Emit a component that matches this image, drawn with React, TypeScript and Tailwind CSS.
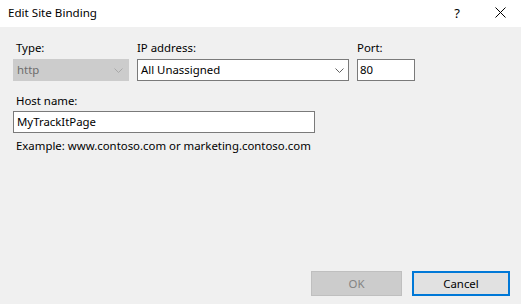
function Chevron({ className }: { className: string }) {
  return (
    <svg width="9" height="5" viewBox="0 0 9 5" className={className}>
      <polyline points="0.5,0.5 4.5,4.5 8.5,0.5" fill="none" stroke="currentColor" strokeWidth="1" />
    </svg>
  );
}

export default function App() {
  return (
    <main
      className="w-[521px] h-[304px] flex flex-col bg-[#f0f0f0] text-[11.4px] text-black overflow-hidden"
      style={{ fontFamily: '"Noto Sans", "Open Sans", sans-serif' }}
    >
      {/* title bar */}
      <div className="h-[27px] bg-white flex items-center">
        <span className="ml-[8px] leading-[16px] -mt-[2px] text-[11.6px]">Edit Site Binding</span>
        <span className="ml-auto mr-[35px] leading-[16px] -mt-[2px] text-[13px]">?</span>
        <svg width="11" height="11" viewBox="0 0 11 11" className="mr-[15px] -mt-[2px]">
          <path d="M0.5 0.5 L10.5 10.5 M10.5 0.5 L0.5 10.5" stroke="black" strokeWidth="1" />
        </svg>
      </div>

      {/* body */}
      <div className="flex-1 flex flex-col pt-[13px] pl-[13px]">
        <div className="flex gap-[8px]">
          <div className="flex flex-col w-[116px]">
            <label className="leading-[16px] pl-[3px] mb-[3px]">Type:</label>
            <div className="h-[22px] flex items-center bg-[#cccccc] border border-[#cccccc] pl-[3px] pr-[5px] text-[#6d6d6d]">
              <span className="flex-1">http</span>
              <Chevron className="text-[#a8a8a8]" />
            </div>
          </div>
          <div className="flex flex-col w-[212px]">
            <label className="leading-[16px] mb-[3px]">IP address:</label>
            <div className="h-[22px] flex items-center bg-white border border-[#7a7a7a] pl-[3px] pr-[4px]">
              <span className="flex-1">All Unassigned</span>
              <Chevron className="text-[#606060]" />
            </div>
          </div>
          <div className="flex flex-col w-[58px]">
            <label className="leading-[16px] mb-[3px]">Port:</label>
            <div className="h-[22px] flex items-center bg-white border border-[#7a7a7a] pl-[2px]">80</div>
          </div>
        </div>

        <label className="mt-[12px] leading-[16px] pl-[3px] mb-[2px]">Host name:</label>
        <div className="w-[302px] h-[22px] flex items-center bg-white border border-[#7a7a7a] pl-[3px]">
          MyTrackItPage
        </div>
        <p className="mt-[5px] leading-[16px] pl-[3px]">
          Example: www.contoso.com or marketing.contoso.com
        </p>

        <div className="mt-auto mb-[8px] flex justify-end gap-[10px] pr-[11px]">
          <button
            type="button"
            className="w-[91px] h-[25px] bg-[#cccccc] border border-[#bfbfbf] text-[#838383]"
          >
            OK
          </button>
          <button
            type="button"
            className="w-[98px] h-[25px] bg-[#e1e1e1] border-2 border-[#0078d7] text-black"
          >
            Cancel
          </button>
        </div>
      </div>
    </main>
  );
}
